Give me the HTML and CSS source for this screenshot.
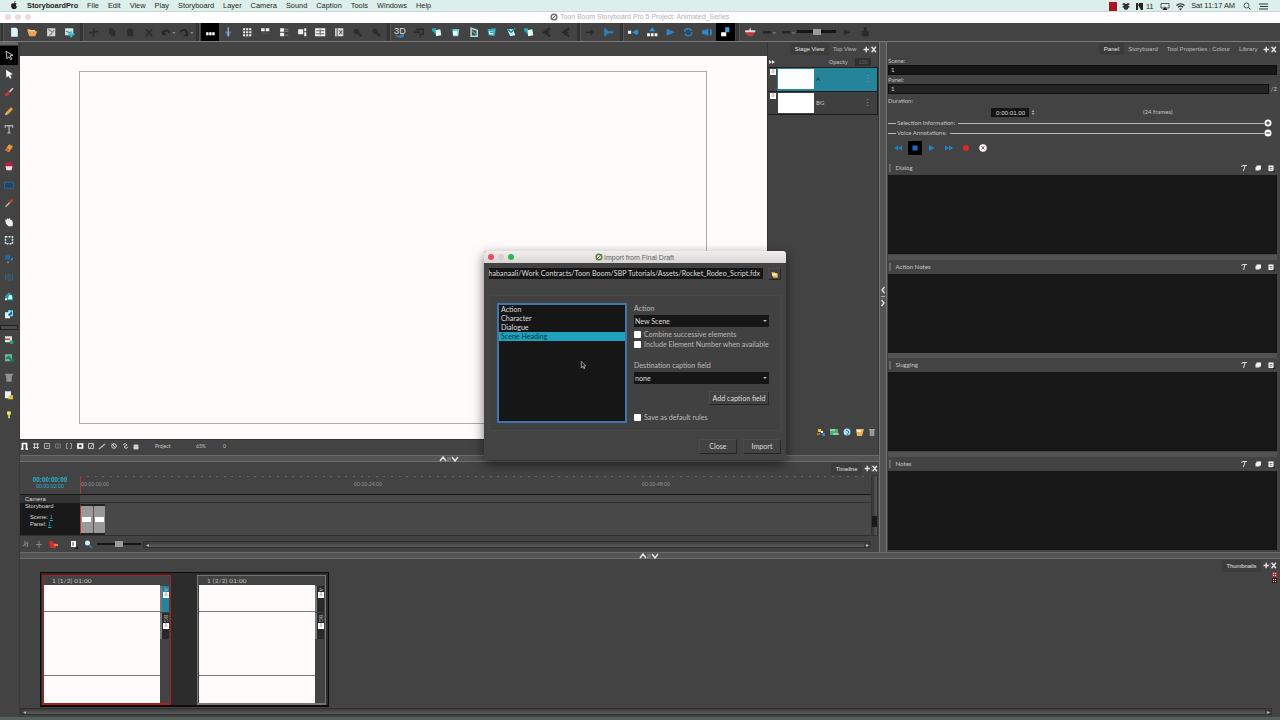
FILE: index.html
```html
<!DOCTYPE html>
<html lang="en">
<head>
    <meta charset="UTF-8">
    <title>StoryboardPro</title>
    <link rel="stylesheet" href="styles.css">
</head>
<body>
    <svg class="defs">
        <symbol id="new" viewBox="0 0 18 18"><path d="M6 4.500h5l1.500 1.500v7.500h-6.500z" fill="#d8f3fa"/></symbol>
        <symbol id="open" viewBox="0 0 18 18"><path d="M4 6h3l1 1h4v1h2l-2 5h-6z" fill="#eda055"/><path d="M5 7h7v1h-6z" fill="#ffd9a8"/></symbol>
        <symbol id="save" viewBox="0 0 18 18"><path d="M5 5h8v8h-8z" fill="#d4d4d4"/><path d="M6 6l4 3 2-2M7 12l3-2" stroke="#777" fill="none"/></symbol>
        <symbol id="saveas" viewBox="0 0 18 18"><path d="M5 5h8v7h-8z" fill="#cfe4e4"/><path d="M6 8l5 2" stroke="#55757a"/><path d="M11 8v6M8 11h6" stroke="#3cc0d4" stroke-width="2"/></symbol>
        <symbol id="cut" viewBox="0 0 18 18"><path d="M4 10l9-2M9 5l-1 8" stroke="#2b2b2b" stroke-width="1.500"/></symbol>
        <symbol id="copy" viewBox="0 0 18 18"><path d="M6 5h4v2h2v6h-4v-2h-2z" fill="#2c2c2c"/></symbol>
        <symbol id="paste" viewBox="0 0 18 18"><path d="M6 6h2v-1h2v1h2v7h-6z" fill="#2c2c2c"/></symbol>
        <symbol id="del" viewBox="0 0 18 18"><path d="M6 6l6 7M12 6l-6 7" stroke="#2b2b2b" stroke-width="1.500"/></symbol>
        <symbol id="undo" viewBox="0 0 18 18"><path d="M5 10c2-4 6-3 6 0" stroke="#282828" stroke-width="2" fill="none"/><path d="M4 7v5h5z" fill="#282828"/><path d="M14 9h3l-1.500 1.500z" fill="#aaa"/></symbol>
        <symbol id="redo" viewBox="0 0 18 18"><path d="M4 9c3-4 7-2 6 1" stroke="#282828" stroke-width="2" fill="none"/><path d="M12 8v5h-5z" fill="#282828"/><path d="M14 9h3l-1.500 1.500z" fill="#aaa"/></symbol>
        <symbol id="dots" viewBox="0 0 18 18"><path d="M5 9h2.400v3h-2.400zM8 9h2.400v3h-2.400zM11 9h2.400v3h-2.400z" fill="#fff"/></symbol>
        <symbol id="tl" viewBox="0 0 18 18"><path d="M6 9h6M9 4v8" stroke="#4c7fa8" stroke-width="1.500"/><path d="M7 10h4l-2 4z" fill="#5791c0"/><path d="M9 4v9" stroke="#bcd" stroke-width=".7"/></symbol>
        <symbol id="grid" viewBox="0 0 18 18"><path d="M5 5h8v8h-8z" fill="#eee"/><path d="M7.500 5v8M10.500 5v8M5 7.500h8M5 10.500h8" stroke="#444"/></symbol>
        <symbol id="two" viewBox="0 0 18 18"><path d="M5 5h3.500v3h-3.500zM9.500 5h3.500v3h-3.500z" fill="#eee"/><path d="M6 10h6" stroke="#555"/></symbol>
        <symbol id="list" viewBox="0 0 18 18"><path d="M5 5h4v3.500h-4zM5 9.500h4v3.500h-4z" fill="#eee"/><path d="M10 6h3M10 8h3M10 12h3" stroke="#888"/></symbol>
        <symbol id="side" viewBox="0 0 18 18"><path d="M5 6h5v5h-5zM11 5h2v3h-2zM11 9h2v4h-2z" fill="#eee"/></symbol>
        <symbol id="rows" viewBox="0 0 18 18"><path d="M4 5h10v8h-10z" fill="#eee"/><path d="M5 7.500h8M5 10.500h8M9 6v6" stroke="#666"/></symbol>
        <symbol id="film" viewBox="0 0 18 18"><path d="M5 5h8v8h-8z" fill="#ddd"/><path d="M7 5v8M9 7l3 4M12 7l-3 4" stroke="#555"/></symbol>
        <symbol id="lens" viewBox="0 0 18 18"><circle cx="8" cy="8" r="2.500" fill="#2b2b2b"/><path d="M9 9l4 4" stroke="#2b2b2b" stroke-width="2"/></symbol>
        <symbol id="threed" viewBox="0 0 18 18"><path d="M4 11q5 4 8-1l1 3q-5 3-9-1z" fill="#3184c4"/><text x="3" y="10.500" font-size="9" fill="#ddd" font-family="Liberation Sans">3D</text></symbol>
        <symbol id="threedoff" viewBox="0 0 18 18"><path d="M4 9h5l-2-3h6v5h-3v3" stroke="#2a2a2a" stroke-width="1.500" fill="none"/></symbol>
        <symbol id="la" viewBox="0 0 18 18"><path d="M4 5h4v3h-4z" fill="#28a9b6"/><path d="M7 7l5-1 1 6-5 1z" fill="#e2fafa"/><path d="M5 8l2 3 1-4z" fill="#1db3bf"/></symbol>
        <symbol id="lb" viewBox="0 0 18 18"><path d="M6 6h7l-1 7h-5z" fill="#7fdbd9"/><path d="M7 8h4v4h-4z" fill="#effefe"/><path d="M4 6l3 1" stroke="#279"/></symbol>
        <symbol id="lc" viewBox="0 0 18 18"><path d="M6 5l6 2v6h-6z" fill="none" stroke="#b5dedc" stroke-width="1.500"/><path d="M7 8l4 3" stroke="#43a5ab" stroke-width="1.500"/></symbol>
        <symbol id="ld" viewBox="0 0 18 18"><path d="M4.500 6l8-1-1 8-6-1z" fill="#2eb2c1"/><path d="M6 8h4v3h-4z" fill="#fff"/><path d="M7 9h3" stroke="#159"/></symbol>
        <symbol id="le" viewBox="0 0 18 18"><path d="M5 6h6l2 6-5 1z" fill="#c0f0f1"/><path d="M5 6l4 3 4-4" stroke="#228d9b" stroke-width="1.500" fill="none"/></symbol>
        <symbol id="share" viewBox="0 0 18 18"><path d="M12 5l-6 4 6 4M6 9h5" stroke="#292929" stroke-width="2" fill="none"/></symbol>
        <symbol id="arr" viewBox="0 0 18 18"><path d="M5 9h5" stroke="#292929" stroke-width="1.500"/><path d="M9 6l4 3-4 3z" fill="#292929"/></symbol>
        <symbol id="bar" viewBox="0 0 18 18"><path d="M5 5v8M8 9h5" stroke="#2782be" stroke-width="1.800"/><path d="M6 6l4 3-4 3z" fill="#2782be"/></symbol>
        <symbol id="pp" viewBox="0 0 18 18"><path d="M4 7.500h3v3h-3z" fill="#fff"/><path d="M8 9l5-3v6z" fill="#2793d8"/><path d="M12 9h2" stroke="#2793d8" stroke-width="3"/></symbol>
        <symbol id="up" viewBox="0 0 18 18"><path d="M9 4l3 4h-6z" fill="#2793d8"/><path d="M4 10h2.700v3h-2.700zM7.700 10h2.700v3h-2.700zM11.400 10h2.700v3h-2.700z" fill="#fff"/></symbol>
        <symbol id="play" viewBox="0 0 18 18"><path d="M5.500 5.500l8 3.500-8 3.500z" fill="#2b87c9"/></symbol>
        <symbol id="loop" viewBox="0 0 18 18"><circle cx="9" cy="9" r="3.500" fill="none" stroke="#2b7fc0" stroke-width="1.700" stroke-dasharray="9 2"/></symbol>
        <symbol id="snd" viewBox="0 0 18 18"><path d="M4 7h3l3-2v8l-3-2h-3z" fill="#2b8bd0"/><path d="M12 6q2 3 0 6" stroke="#2b8bd0" stroke-width="1.500" fill="none"/></symbol>
        <symbol id="cam" viewBox="0 0 18 18"><path d="M9 4h4v5h-4z" fill="#3aa4e0"/><path d="M5 9h5v4h-5z" fill="#fff"/></symbol>
        <symbol id="bowl" viewBox="0 0 18 18"><path d="M4 8h10l-2 4h-1v1h-4v-1h-1z" fill="#bd3a3a"/><path d="M4 7h10v2h-10zM9 4l1 3h-2z" fill="#e5d5d5"/></symbol>
        <symbol id="dash" viewBox="0 0 18 18"><path d="M4 9h8" stroke="#252525" stroke-width="2.500"/><path d="M13 9h4l-2 2z" fill="#777"/></symbol>
        <symbol id="tri" viewBox="0 0 18 18"><path d="M6 6l6 3-6 3z" fill="#282828"/></symbol>
        <symbol id="man" viewBox="0 0 18 18"><path d="M7.500 4h3v4h2v5h-7v-5h2z" fill="#2b2b2b"/></symbol>

        <symbol id="arrow1" viewBox="0 0 18 18"><path d="M6 5l7 4-3 .6 2 3-1.200.9-2-3-1.800 2z" fill="#111" stroke="#eee" stroke-width=".8"/></symbol>
        <symbol id="arrow2" viewBox="0 0 18 18"><path d="M6 4.500l7 4.500-3 .6 1.600 3-1.500.9-1.800-3-1.800 2z" fill="#fff"/></symbol>
        <symbol id="brush" viewBox="0 0 18 18"><path d="M13 5l-4 4" stroke="#cfd0d4" stroke-width="1.700"/><path d="M9.500 8.500l-4 4" stroke="#c63535" stroke-width="2.600"/></symbol>
        <symbol id="pencil" viewBox="0 0 18 18"><path d="M12 6l-5 5" stroke="#e5a338" stroke-width="3"/><path d="M5 13l1-3 2 2z" fill="#f3ddb3"/></symbol>
        <symbol id="text" viewBox="0 0 18 18"><path d="M5 5.500h8M9 5.500v7M7.500 12.500h3M5.300 5v2.500M12.700 5v2.500" stroke="#aaa" stroke-width="1.300"/></symbol>
        <symbol id="eraser" viewBox="0 0 18 18"><path d="M9 5l4 2-4 6-4-2z" fill="#e29a41"/><path d="M6.500 8.500l3 1.500-1.500 2.500-2.500-1.500z" fill="#d05f35"/></symbol>
        <symbol id="paint" viewBox="0 0 18 18"><path d="M5.500 5h7v5h-7z" fill="#b81e3f"/><path d="M5.500 9h7l-1 4h-5z" fill="#f2dfe1"/></symbol>
        <symbol id="rect" viewBox="0 0 18 18"><path d="M4.500 6h9v6h-9z" fill="#214661" stroke="#2c648f"/></symbol>
        <symbol id="drop" viewBox="0 0 18 18"><path d="M12.500 5.500l-3.500 3.500" stroke="#d44333" stroke-width="2"/><path d="M9.500 8.500l-4 4" stroke="#d5c08c" stroke-width="1.200"/></symbol>
        <symbol id="hand" viewBox="0 0 18 18"><path d="M5 6l1.500 1 .5-2 1.500 1 1-1.500 1 2 1.500.5 1 3-.5 3h-4l-2.500-2.500z" fill="#eee"/></symbol>
        <symbol id="marq" viewBox="0 0 18 18"><path d="M5.500 5.500h7v7h-7z" fill="none" stroke="#c8eef1" stroke-width="1.500" stroke-dasharray="2 1"/></symbol>
        <symbol id="pivot" viewBox="0 0 18 18"><path d="M5 5h5v4h-5z" fill="#2167a3"/><path d="M11 8h2v2h-2zM7 11h2v2h-2z" fill="#4a8bb9"/></symbol>
        <symbol id="split" viewBox="0 0 18 18"><path d="M5.500 6v6M8 6v6h2v-6zM12.500 6v6" stroke="#2d6581" fill="none"/></symbol>
        <symbol id="t1" viewBox="0 0 18 18"><path d="M5 9l4-4 4 4v4h-7z" fill="#2b9caf"/><path d="M9 8h3v4h-4zM5 11h2v2h-2z" fill="#d8fafa"/></symbol>
        <symbol id="t2" viewBox="0 0 18 18"><path d="M8 5h5v6h-5z" fill="#78d8ec"/><path d="M5 7h5v6h-5z" fill="#d5f5fa"/><path d="M8 9l4-3v3l-3 2z" fill="#1a6ea6"/></symbol>
        <symbol id="addp" viewBox="0 0 18 18"><path d="M5 5h7v6h-7z" fill="#dfe5dc"/><path d="M5 8h5" stroke="#b54b43" stroke-width="1.400"/><circle cx="11.500" cy="11" r="2" fill="#2e9c78"/></symbol>
        <symbol id="addg" viewBox="0 0 18 18"><path d="M5 5h7v7h-7z" fill="#72b698"/><path d="M6 9l3-1 2 3h3" stroke="#167d5a" stroke-width="2" fill="none"/></symbol>
        <symbol id="trash" viewBox="0 0 18 18"><path d="M5 5.500h8v1.500h-1l-.5 6.500h-5l-.5-6.500h-1z" fill="#929292"/></symbol>
        <symbol id="note" viewBox="0 0 18 18"><path d="M5 5h6v7h-6z" fill="#e8f0ff"/><path d="M9 9h4v4h-5z" fill="#e5c33c"/></symbol>
        <symbol id="bulb" viewBox="0 0 18 18"><path d="M7 6h4v3l-1 1v3h-2v-3l-1-1z" fill="#d6bb47"/><path d="M7.500 7h2v2h-2z" fill="#fff8bd"/></symbol>

        <symbol id="plusx" viewBox="0 0 13 8"><path d="M3 1.500v5M.5 4h5M8 1.500l4 5M12 1.500l-4 5" stroke="#e4e4e4" stroke-width="1.300"/><path d="M6.700 1v6" stroke="#777" stroke-width=".6"/></symbol>
        <symbol id="eye" viewBox="0 0 6 6"><path d="M0 0h6v6h-6z" fill="#fff"/><path d="M3 0v2M1.500 3h3" stroke="#777" stroke-width=".8"/></symbol>
        <symbol id="ital" viewBox="0 0 10 10"><path d="M3.500 2.500h4.500M6 2.500l-1.500 5.500M3 4v-1.500" stroke="#ddd" fill="none"/></symbol>
        <symbol id="page" viewBox="0 0 10 10"><path d="M3.500 2.500h4.500v4h-4.500z" fill="#fff"/><path d="M2.500 4h4v3.500h-4z" fill="#eee"/></symbol>
        <symbol id="menu" viewBox="0 0 10 10"><path d="M2.500 2.500h5v5.500h-5z" fill="#fff"/><path d="M3.500 4.500h3M3.500 6.200h3" stroke="#555" stroke-width=".8"/><path d="M8.500 7v2h-2z" fill="#111"/></symbol>
        <symbol id="updown" viewBox="0 0 20 6"><path d="M1 5l3-4 3 4M13 1l3 4 3-4" fill="none" stroke="#e2e2e2" stroke-width="1.500"/><path d="M9 1v4M11 1v4" stroke="#aaa" stroke-width=".7"/></symbol>
        <symbol id="toon" viewBox="0 0 8 8"><circle cx="4" cy="4" r="2.800" fill="none" stroke="#5b7d35" stroke-width="1.500"/><path d="M1.500 6.500l5-5" stroke="#5b7d35"/></symbol>
    </svg>

    <header class="menubar">
        <svg class="apple" viewBox="0 0 8 9"><path d="M4 2.500c1-.7 2-.5 2.700.2-1 .8-1 2.400.3 3.100-.5 1.500-1.400 2.400-2 2.300-.7-.2-1-.2-1.600 0-1 .3-2.400-1.900-2.400-3.600 0-2 1.600-2.900 3-2zM4 2c0-1 .6-1.800 1.500-2 0 1-.5 1.900-1.500 2z" fill="#222"/></svg>
        <b>StoryboardPro</b>
        <nav><span>File</span><span>Edit</span><span>View</span><span>Play</span><span>Storyboard</span><span>Layer</span><span>Camera</span><span>Sound</span><span>Caption</span><span>Tools</span><span>Windows</span><span>Help</span></nav>
        <div class="status">
            <svg class="s-icons" viewBox="0 0 82 10">
                <path d="M0 1h8v9h-8z" fill="#a91623"/>
                <path d="M13 3l2-1 2 1 2-1 2 1-2 1.500 2 1.500-2 1v1l-2 1-2-1v-1l-2-1 2-1.500z" fill="#333"/>
                <path d="M27 9v-7h2l1 3v-3h4v7h-2l-3-5v5z" fill="#222"/>
                <text x="37" y="8" font-size="7.200" font-family="Liberation Sans" fill="#222">11</text>
                <path d="M55 7h-3v-4.500h8v4.500h-3" fill="none" stroke="#333" stroke-width=".8"/><path d="M53.500 9l2.500-3.500 2.500 3.500z" fill="#222"/>
                <path d="M67.500 4.500q4-3.500 8 0M69 6.200q2.500-2 5 0" fill="none" stroke="#222" stroke-width="1.200"/><path d="M70 7.500h3l-1.500 2z" fill="#222"/>
            </svg>
            <span>Sat 11:17 AM</span>
            <svg class="s-end" viewBox="0 0 26 10"><circle cx="3.500" cy="4.500" r="2.500" fill="none" stroke="#333" stroke-width=".8"/><path d="M5.500 6.500l2 2M16 3h9M17 5.500h8M16 8h9" stroke="#333" stroke-width="1"/></svg>
        </div>
    </header>

    <div class="titlebar">
        <i></i><i></i><i></i>
        <p><svg viewBox="0 0 8 8"><use href="#toon"/></svg>Toon Boom Storyboard Pro 5 Project: Animated_Series</p>
    </div>

    <div class="toolbar">
        <div class="group"><svg><use href="#new"/></svg><svg><use href="#open"/></svg><svg><use href="#save"/></svg><svg><use href="#saveas"/></svg></div>
        <div class="group"><svg><use href="#cut"/></svg><svg><use href="#copy"/></svg><svg><use href="#paste"/></svg><svg><use href="#del"/></svg><svg><use href="#undo"/></svg><svg><use href="#redo"/></svg></div>
        <div class="group"><svg class="on"><use href="#dots"/></svg><svg><use href="#tl"/></svg><svg><use href="#grid"/></svg><svg><use href="#two"/></svg><svg><use href="#list"/></svg><svg><use href="#side"/></svg><svg><use href="#rows"/></svg><svg><use href="#film"/></svg><svg><use href="#lens"/></svg><svg><use href="#lens"/></svg></div>
        <div class="group"><svg><use href="#threed"/></svg><svg><use href="#threedoff"/></svg><svg><use href="#la"/></svg><svg><use href="#lb"/></svg><svg><use href="#lc"/></svg><svg><use href="#ld"/></svg><svg><use href="#le"/></svg><svg><use href="#la"/></svg><svg><use href="#share"/></svg><svg><use href="#share"/></svg></div>
        <div class="group"><svg><use href="#arr"/></svg><svg><use href="#bar"/></svg></div>
        <div class="group"><svg><use href="#pp"/></svg><svg><use href="#up"/></svg><svg><use href="#play"/></svg><svg><use href="#loop"/></svg><svg><use href="#snd"/></svg><svg class="on"><use href="#cam"/></svg></div>
        <div class="group"><svg><use href="#bowl"/></svg><svg><use href="#dash"/></svg><svg><use href="#dash"/></svg><div class="slider"><b></b></div><svg><use href="#tri"/></svg><svg><use href="#man"/></svg></div>
    </div>

    <div class="workspace">
        <aside class="tools">
            <hr>
            <svg class="on"><use href="#arrow1"/></svg>
            <svg><use href="#arrow2"/></svg>
            <svg><use href="#brush"/></svg>
            <svg><use href="#pencil"/></svg>
            <svg><use href="#text"/></svg>
            <svg><use href="#eraser"/></svg>
            <svg><use href="#paint"/></svg>
            <svg><use href="#rect"/></svg>
            <svg><use href="#drop"/></svg>
            <svg><use href="#hand"/></svg>
            <svg><use href="#marq"/></svg>
            <svg><use href="#pivot"/></svg>
            <svg><use href="#split"/></svg>
            <svg><use href="#t1"/></svg>
            <svg><use href="#t2"/></svg>
            <hr class="mid">
            <svg><use href="#addp"/></svg>
            <svg><use href="#addg"/></svg>
            <svg><use href="#trash"/></svg>
            <svg><use href="#note"/></svg>
            <svg><use href="#bulb"/></svg>
        </aside>

        <div class="content">
            <div class="upper">
                <div class="left">
                    <section class="stage">
                        <div class="view">
                            <div class="canvas"><div class="frame"></div></div>
                            <div class="view-bar">
                                <svg viewBox="0 0 120 10" fill="none" stroke="#ccc">
                                    <path d="M2.500 8v-5.500h4v5.500M1 8h2.500M5.500 8h2.500" stroke="#fff" stroke-width="1.700"/>
                                    <path d="M13 3h6M13 6.500h6M14.500 2v6M17.500 2v6"/>
                                    <path d="M24.500 2.500h5v5h-5zM26 5h2" stroke="#aaa"/>
                                    <path d="M35.500 3h5v4h-5zM38 3v4" stroke="#777"/>
                                    <path d="M48 2.500h-1.500v5h1.500M50 2.500h1.500v5h-1.500" stroke="#999"/>
                                    <path d="M58 3h4.500v4h-4.500z" stroke="#fff" stroke-width="1.700"/>
                                    <path d="M68.500 2.500h5v5h-5zM70 7l3-4" stroke="#bbb"/>
                                    <path d="M79 8l6-5" stroke="#bbb" stroke-width="1.300"/>
                                    <circle cx="94" cy="5" r="2.300"/><path d="M92 2.500l3 4" />
                                    <path d="M103 4q2-3 4 0l-3 2q2 3 4 0"/>
                                    <path d="M114 4h4v4h-4z" fill="#ccc"/>
                                </svg>
                                <span class="proj">Project</span><span class="zoom">65%</span><span class="rot">0</span>
                            </div>
                        </div>
                        <div class="layers">
                            <div class="tabs"><span class="tab active">Stage View</span><span class="tab">Top View</span><svg><use href="#plusx"/></svg></div>
                            <div class="opacity"><svg viewBox="0 0 6 6"><path d="M0 1l3 2-3 2zM3 1l3 2-3 2z" fill="#ddd"/></svg><span>Opacity</span><em>100</em></div>
                            <div class="layer selected"><svg class="eye"><use href="#eye"/></svg><div class="pic"></div><span>A</span><i>⋮</i></div>
                            <div class="layer"><svg class="eye"><use href="#eye"/></svg><div class="pic"></div><span>BG</span><i>⋮</i></div>
                            <div class="layer-tools">
                                <svg viewBox="0 0 64 12">
                                    <path d="M3 3h3v3h-3z" fill="#edbd45"/><path d="M6 5h2v2h-2z" fill="#fff"/><path d="M7 7h3v3h-3z" fill="#3186c9"/><path d="M2 7h3v2h-3z" fill="#c3702e"/>
                                    <path d="M15 3h8v6h-8z" fill="#4fae74"/><path d="M15 4h5M18 8l6 0" stroke="#d9f2dc"/>
                                    <circle cx="32" cy="6" r="3.500" fill="#a9def2"/><path d="M31 4l3 2-2 3" stroke="#207da7" fill="none"/>
                                    <path d="M41 3h8l-2 7h-5z" fill="#eab05c"/><path d="M42 4h4v2h-4z" fill="#fff2cf"/>
                                    <path d="M54 3h6v1.500h-.7v5.500h-4.600v-5.500h-.7z" fill="#999"/>
                                </svg>
                            </div>
                        </div>
                    </section>
                    <div class="splitter"><svg class="ud-stage"><use href="#updown"/></svg></div>
                    <section class="timeline">
                        <div class="tabs"><span class="tab active">Timeline</span><svg><use href="#plusx"/></svg></div>
                        <div class="tl-body">
                            <div class="tl-main">
                                <div class="ruler">
                                    <div class="codes"><b>00:00:00:00</b><small>00:00:02:00</small></div>
                                    <div class="ticks"><span>00:00:00:00</span><span>00:00:24:00</span><span>00:00:48:00</span></div>
                                </div>
                                <div class="track camera"><div class="name">Camera</div></div>
                                <div class="track board">
                                    <div class="name">Storyboard<p>Scene: <u>1</u></p><p>Panel: <u>1</u></p></div>
                                    <div class="clips"><i></i><i></i></div>
                                </div>
                            </div>
                            <div class="vscroll"><b></b></div>
                        </div>
                        <div class="tl-tools">
                            <svg viewBox="0 0 76 12"><path d="M3 8l5-4M5 3v5M8 5l-1 4" stroke="#888"/><path d="M19 3v7M16 6.500h6" stroke="#888"/><path d="M29 3h4v2h3v5h-6z" fill="#ce3028"/><path d="M34 7h4" stroke="#f0795f" stroke-width="2"/><path d="M51 3h5v6h-5z" fill="#fff"/><path d="M52 5h2M52 7h2" stroke="#444"/><path d="M58 8v3h-3z" fill="#111"/><circle cx="67.500" cy="5" r="2.500" fill="#d1eff5"/><path d="M69 7l3 3" stroke="#2a90ae" stroke-width="1.500"/></svg>
                            <div class="slider"><b></b></div>
                            <div class="hscroll"><i>◂</i><i>▸</i></div>
                        </div>
                    </section>
                </div>

                <div class="vsplit"><svg viewBox="0 0 6 24"><path d="M4.500 2l-2.500 3 2.500 3M1.500 15l2.500 3-2.500 3" fill="none" stroke="#e2e2e2" stroke-width="1.300"/><path d="M1 11.500h4" stroke="#aaa"/></svg></div>

                <section class="panel">
                    <div class="tabs"><span class="tab active">Panel</span><span class="tab">Storyboard</span><span class="tab">Tool Properties : Colour</span><span class="tab">Library</span><svg><use href="#plusx"/></svg></div>
                    <label>Scene:</label>
                    <div class="field">1</div>
                    <label>Panel:</label>
                    <div class="field-row"><div class="field dim">1</div><span>/2</span></div>
                    <label class="dur">Duration:</label>
                    <div class="duration"><b>0:00:01.00</b><i>▴<br>▾</i><span>(24 frames)</span></div>
                    <div class="fold">Selection Information:<svg viewBox="0 0 8 8"><circle cx="4" cy="4" r="3.500" fill="#fff"/><path d="M2 4h4M4 2v4" stroke="#333"/></svg></div>
                    <div class="fold">Voice Annotations:<svg viewBox="0 0 8 8"><circle cx="4" cy="4" r="3.500" fill="#fff"/><path d="M2 4h4" stroke="#333"/></svg></div>
                    <div class="voice">
                        <svg viewBox="0 0 14 14"><path d="M7 4.500v5l-4-2.500zM11 4.500v5l-4-2.500z" fill="#237fbe"/></svg>
                        <svg viewBox="0 0 14 14" class="on"><path d="M4.500 4.500h5v5h-5z" fill="#1d69be"/></svg>
                        <svg viewBox="0 0 14 14"><path d="M4 4l6 3-6 3z" fill="#2683c5"/></svg>
                        <svg viewBox="0 0 14 14"><path d="M3 4.500l4 2.500-4 2.500zM7 4.500l4.500 2.500-4.500 2.500z" fill="#2683c5"/></svg>
                        <svg viewBox="0 0 14 14"><circle cx="7" cy="7" r="3" fill="#d82b2b"/></svg>
                        <svg viewBox="0 0 14 14"><circle cx="7" cy="7" r="3.700" fill="#fff"/><path d="M5.500 5l3 3.500M8.500 5l-3 3.500" stroke="#935"/></svg>
                    </div>
                    <div class="note"><h4><span>Dialog</span><svg><use href="#ital"/></svg><svg><use href="#page"/></svg><svg><use href="#menu"/></svg></h4><div></div></div>
                    <div class="note"><h4><span>Action Notes</span><svg><use href="#ital"/></svg><svg><use href="#page"/></svg><svg><use href="#menu"/></svg></h4><div></div></div>
                    <div class="note"><h4><span>Slugging</span><svg><use href="#ital"/></svg><svg><use href="#page"/></svg><svg><use href="#menu"/></svg></h4><div></div></div>
                    <div class="note"><h4><span>Notes</span><svg><use href="#ital"/></svg><svg><use href="#page"/></svg><svg><use href="#menu"/></svg></h4><div></div></div>
                </section>
            </div>

            <div class="splitter"><svg class="ud-main"><use href="#updown"/></svg></div>

            <section class="thumbs">
                <div class="tabs"><span class="tab active">Thumbnails</span><svg><use href="#plusx"/></svg></div>
                <div class="strip-row">
                    <div class="strip">
                        <div class="thumb current">
                            <h5>1 (1/2) 01:00</h5>
                            <div class="thumb-body"><div class="shot"></div><div class="mini"><p class="sel">A<svg><use href="#eye"/></svg></p><p>BG<svg><use href="#eye"/></svg></p></div></div>
                        </div>
                        <div class="thumb">
                            <h5>1 (2/2) 01:00</h5>
                            <div class="thumb-body"><div class="shot"></div><div class="mini"><p>A<svg><use href="#eye"/></svg></p><p>BG<svg><use href="#eye"/></svg></p></div></div>
                        </div>
                    </div>
                    <svg class="marks" viewBox="0 0 5 12"><path d="M0 0h5v5h-5z" fill="#a33"/><path d="M0 6h5v5h-5z" fill="#411"/><path d="M1 1.500h3M1 3.500h3M1 7.500h3M1 9.500h3" stroke="#fff" stroke-dasharray="1 1"/></svg>
                </div>
                <div class="hscroll"><i>◂</i><i>▸</i></div>
            </section>
        </div>
    </div>

    <div class="dialog">
        <div class="dialog-title">
            <i class="red"></i><i></i><i class="green"></i>
            <p><svg viewBox="0 0 8 8"><use href="#toon"/></svg>Import from Final Draft</p>
        </div>
        <div class="path-row">
            <div class="path"><span>habanaali/Work Contracts/Toon Boom/SBP Tutorials/Assets/Rocket_Rodeo_Script.fdx</span></div>
            <button><svg viewBox="0 0 10 8"><path d="M2 2h3l1 1h2v4h-4z" fill="#ecb04c"/><path d="M3 3h4v2h-4z" fill="#fff0c4"/></svg></button>
        </div>
        <div class="rules">
            <ul><li>Action</li><li>Character</li><li>Dialogue</li><li class="selected">Scene Heading</li></ul>
            <div class="options">
                <h6>Action</h6>
                <div class="select">New Scene</div>
                <div class="check first"><i></i>Combine successive elements</div>
                <div class="check"><i></i>Include Element Number when available</div>
                <h6 class="dest">Destination caption field</h6>
                <div class="select">none</div>
                <button class="add">Add caption field</button>
                <div class="check save"><i></i>Save as default rules</div>
            </div>
        </div>
        <div class="actions"><button>Close</button><button>Import</button></div>
        <svg class="cursor" viewBox="0 0 8 10"><path d="M1.500 1l5 5-2.300.2 1.300 2.500-1 .5-1.300-2.500-1.700 1.500z" fill="#111" stroke="#eee" stroke-width=".7"/></svg>
    </div>
</body>
</html>
```

FILE: styles.css
```css
* {
    margin: 0;
    padding: 0;
    box-sizing: border-box;
}

body {
    width: 1280px;
    height: 720px;
    display: flex;
    flex-direction: column;
    overflow: hidden;
    background: #53625d;
    color: #c6c6c6;
    font-family: Lato, "Liberation Sans", sans-serif;
    font-size: 6px;
    line-height: 8px;
    position: relative;
}

svg {
    display: block;
    flex: none;
}

i, em {
    font-style: normal;
}

.defs {
    display: none;
}

/* mac menu bar */
.menubar {
    height: 12px;
    flex: none;
    display: flex;
    align-items: center;
    padding-left: 10px;
    background: #dcefea;
    border-bottom: 1px solid #c8d5d2;
    color: #1f2523;
    font: 7.400px/11px "Liberation Sans", sans-serif;
}

.apple {
    width: 8px;
    height: 9px;
}

.menubar b {
    width: 51px;
    margin-left: 9px;
    letter-spacing: -.05px;
}

.menubar nav {
    display: flex;
    gap: 9px;
    margin-left: 9px;
}

.status {
    display: flex;
    align-items: center;
    margin-left: auto;
    padding-right: 11px;
}

.s-icons {
    width: 82px;
    height: 10px;
}

.s-end {
    width: 26px;
    height: 10px;
    margin-left: 8px;
}

.titlebar {
    height: 10.500px;
    flex: none;
    display: flex;
    align-items: center;
    gap: 4px;
    padding-left: 5px;
    background: #fefefe;
}

.titlebar i {
    width: 6px;
    height: 6px;
    border-radius: 50%;
    background: #e9dede;
}

.titlebar p {
    display: flex;
    align-items: center;
    gap: 2px;
    margin-left: 515px;
    color: #b4b4b4;
    font: 6.950px/10px "Liberation Sans", sans-serif;
    white-space: nowrap;
}

.titlebar p svg {
    width: 8px;
    height: 8px;
    filter: grayscale(1);
}

/* main toolbar */
.toolbar {
    height: 19.500px;
    flex: none;
    display: flex;
    background: #434343;
    border-bottom: 1px solid #7b7b7b;
}

.group {
    display: flex;
    border-left: 2px solid #333;
    border-right: 1px solid #333;
    padding: 0 1.600px;
    box-shadow: inset 1px 0 #545454;
}

.group:first-child {
    margin-left: 1.200px;
}

.group svg {
    width: 18.400px;
    height: 18.500px;
}

.group:last-child {
    border-right: 0;
}

.on {
    background: #000;
}

.slider {
    width: 42px;
    display: flex;
    align-items: center;
    justify-content: center;
    background: linear-gradient(#161616, #161616) center / 39px 3px no-repeat;
}

.slider b {
    width: 8px;
    height: 6px;
    background: #9b9b9b;
}

.workspace {
    height: 675px;
    flex: none;
    display: flex;
    background: #434343;
}

.tools {
    width: 20px;
    display: flex;
    flex-direction: column;
    border-right: 1px solid #3a3a3a;
}

.tools hr {
    height: 4px;
    border: 0;
    border-bottom: 1px solid #333;
    background: #666;
    width: 18px;
    flex: none;
}

.tools hr.mid {
    height: 5px;
    margin: 1px 0;
    border: 1px solid #222;
    background: #4c4c4c;
}

.tools svg {
    width: 18px;
    height: 18.500px;
}

.content {
    width: 1260px;
    display: flex;
    flex-direction: column;
}

.upper {
    height: 510px;
    display: flex;
}

.left {
    width: 859px;
    display: flex;
    flex-direction: column;
}

.stage {
    height: 413px;
    display: flex;
}

.view {
    width: 747px;
    padding-top: 14px;
}

.canvas {
    height: 383px;
    background: #fffbfa;
    padding: 15px 60px 0 59px;
}

.frame {
    height: 353px;
    border: 1px solid #adabab;
}

.view-bar {
    height: 16px;
    display: flex;
    align-items: center;
    padding-bottom: 3px;
    border-top: 1px solid #333;
    font-size: 5px;
}

.view-bar svg {
    width: 120px;
    height: 10px;
}

.proj {
    width: 41px;
    margin-left: 15px;
}

.zoom {
    width: 27px;
}

/* tab headers */
.tabs {
    height: 14px;
    flex: none;
    display: flex;
    align-items: center;
    justify-content: flex-end;
    font-family: "Liberation Sans", sans-serif;
    font-size: 5.800px;
}

.tab {
    height: 12px;
    padding: 0 4.500px;
    line-height: 12px;
    white-space: nowrap;
    color: #bdbdbd;
}

.tab.active {
    background: #3c3c3c;
    color: #e4e4e4;
}

.tabs svg {
    width: 14px;
    height: 9px;
    margin: 0 1px 0 2px;
}

.layers {
    width: 112px;
    display: flex;
    flex-direction: column;
    border-left: 1px solid #333;
    border-right: 1px solid #333;
}

.opacity {
    height: 11px;
    display: flex;
    align-items: center;
    padding-left: 1px;
    font-family: "Liberation Sans", sans-serif;
    font-size: 5.500px;
}

.opacity svg {
    width: 6px;
    height: 6px;
}

.opacity span {
    margin-left: 54px;
    width: 26px;
}

.opacity em {
    width: 16px;
    height: 8px;
    text-align: center;
    background: #303030;
    color: #666;
}

.layer {
    height: 23.500px;
    width: 110px;
    display: flex;
    align-items: center;
    padding-left: 2px;
    border: solid #1d1d1d;
    border-width: 1px 1px 0 0;
    background: #404040;
}

.layer + .layer-tools {
    border-top: 1px solid #1d1d1d;
}

.layer.selected {
    background: linear-gradient(90deg, #444 9px, #25849a 9px);
    color: #0a2d3a;
}

.eye {
    width: 6px;
    height: 6px;
    align-self: flex-start;
    margin-top: 1px;
}

.pic {
    width: 36px;
    height: 20px;
    margin: 0 2px;
    background: #fff;
}

.layer span {
    flex: 1;
}

.layer i {
    margin-right: 5px;
    font-size: 9px;
    color: #8f8f8f;
}

.layer-tools {
    flex: 1;
    display: flex;
    align-items: flex-end;
    padding: 0 0 17px 47px;
}

.layer-tools svg {
    width: 64px;
    height: 12px;
}

.splitter {
    height: 7px;
    flex: none;
    background: #545454;
    border-top: 1px solid #6a6a6a;
    border-bottom: 1px solid #6e6e6e;
}

.splitter svg {
    width: 20px;
    height: 6px;
}

.ud-stage {
    margin-left: 419px;
}

.ud-main {
    margin-left: 619px;
}

/* timeline */
.timeline {
    height: 90px;
}

.timeline .tabs {
    height: 13px;
}

.tl-body {
    height: 61px;
    display: flex;
}

.tl-main {
    width: 851px;
}

.ruler {
    height: 20px;
    display: flex;
    border-bottom: 1px solid #161616;
    font-family: "Liberation Sans", sans-serif;
}

.codes {
    width: 60px;
    flex: none;
    padding-top: 2px;
    text-align: center;
    color: #24b3ca;
    line-height: 6px;
}

.codes b {
    display: block;
    font-size: 6.300px;
}

.codes small {
    display: block;
    font-size: 5.300px;
}

.ticks {
    width: 791px;
    display: flex;
    margin-top: 1px;
    padding-top: 4px;
    border-left: 1px solid #b33;
    background: repeating-linear-gradient(90deg, #666 0 2px, transparent 2px 7.600px) 6px 0 / 100% 1px no-repeat;
    color: #929292;
    font-size: 5.300px;
}

.ticks span {
    width: 273px;
    flex: none;
}

.ticks span:nth-child(2) {
    width: 288px;
}

.track {
    display: flex;
    border-bottom: 1px solid #303030;
    background: #484848;
    font-family: "Liberation Sans", sans-serif;
    font-size: 5.800px;
    color: #ddd;
}

.track .name {
    width: 60px;
    padding-left: 5px;
}

.camera {
    height: 8px;
}

.camera .name {
    background: #343434;
}

.board {
    height: 33px;
}

.board .name {
    background: #191919;
    line-height: 7px;
}

.board .name p {
    padding-left: 5px;
}

.board .name p:first-of-type {
    margin-top: 4px;
}

.board u {
    color: #28a9c9;
}

.clips {
    width: 25px;
    height: 31px;
    margin-top: 1px;
    display: flex;
    gap: 1px;
    border: solid #222;
    border-width: 2px 0;
    border-left: 1px solid #b33;
    background: #555;
}

.clips i {
    flex: 1;
    background: linear-gradient(#fff, #fff) center / 9px 5px no-repeat, #999;
    border-radius: 1px;
}

.vscroll {
    width: 7px;
    background: linear-gradient(90deg, #353535, #595959);
    border: 1px solid #333;
    padding-top: 40px;
}

.vscroll b {
    display: block;
    height: 11px;
    background: #191919;
}

.tl-tools {
    height: 16px;
    display: flex;
    align-items: center;
}

.tl-tools > svg {
    width: 76px;
    height: 12px;
}

.tl-tools .slider {
    height: 8px;
    width: 46px;
    background-size: 44px 2px;
}

.tl-tools .hscroll {
    width: 728px;
    margin-left: 1px;
}

.hscroll {
    height: 7px;
    display: flex;
    justify-content: space-between;
    border: 1px solid #303030;
    background: linear-gradient(#3a3a3a, #5c5c5c);
    line-height: 5px;
    color: #bbb;
}

.hscroll i {
    width: 6px;
    text-align: center;
    background: #3b3b3b;
}

.vsplit {
    width: 8px;
    padding-top: 243px;
    background: #545454;
    border: solid #757575;
    border-width: 0 1px;
}

.vsplit svg {
    width: 6px;
    height: 24px;
}

/* panel settings on the right */
.panel {
    width: 393px;
    padding: 0 3px 0 1px;
}

.panel .tabs {
    margin-right: -1px;
    font-size: 6.050px;
}

.panel .tabs svg {
    margin-left: 1px;
}

.panel label {
    display: block;
    height: 9px;
    line-height: 10px;
}

.field {
    height: 10px;
    padding-left: 2px;
    line-height: 8px;
    background: #171717;
    border: 1px solid #0f0f0f;
    color: #ddd;
}

.field.dim {
    width: 381px;
    background: #242424;
}

.field-row {
    display: flex;
    gap: 2px;
    line-height: 10px;
}

.panel .dur {
    height: 12px;
    line-height: 14px;
}

.duration {
    height: 12px;
    display: flex;
    align-items: center;
    padding-left: 103px;
}

.duration b {
    width: 38px;
    height: 9px;
    background: #141414;
    color: #ddd;
    padding-left: 5px;
    font: 6.200px/9px "Liberation Sans", sans-serif;
}

.duration i {
    width: 114px;
    padding-left: 3px;
    font-size: 4px;
    line-height: 3px;
}

.fold {
    height: 10px;
    display: flex;
    align-items: center;
    white-space: nowrap;
}

.fold::before {
    content: "";
    width: 8px;
    height: 1px;
    margin-right: 1px;
    background: #bbb;
}

.fold::after {
    content: "";
    flex: 1;
    order: 1;
    height: 1px;
    margin-left: 3px;
    background: #bbb;
}

.fold svg {
    order: 2;
    width: 8px;
    height: 8px;
    margin-right: 5px;
}

.voice {
    height: 23px;
    display: flex;
    gap: 3px;
    padding: 3px 0 0 3px;
}

.voice svg {
    width: 14px;
    height: 14px;
}

.note {
    height: 98.500px;
    border-bottom: 5.500px solid #525252;
}

.note:last-child {
    height: 93px;
    border-bottom: 0;
}

.note h4 {
    height: 14px;
    display: flex;
    align-items: center;
    gap: 3.500px;
    padding: 0 1px 0 7.500px;
    font-weight: normal;
    font-size: 6.100px;
    background: linear-gradient(#666, #666) 1px 3px / 2px 8px no-repeat;
}

.note h4 span {
    flex: 1;
}

.note h4 svg {
    width: 10px;
    height: 10px;
}

.note div {
    height: 79px;
    background: #171717;
}

/* thumbnails */
.thumbs {
    height: 158px;
}

.thumbs .tabs {
    height: 13px;
    padding-right: 2px;
}

.strip-row {
    height: 136px;
    display: flex;
    justify-content: space-between;
    padding: 0 3px 0 20px;
}

.marks {
    width: 5px;
    height: 12px;
}

.strip {
    width: 289px;
    height: 135px;
    display: flex;
    gap: 26px;
    padding: 2px 1px;
    border: 1px solid #0c0c0c;
    border-bottom-width: 2px;
    background: #2c2c2c;
}

.thumb {
    width: 129px;
    height: 130px;
    flex: none;
    border: 1px solid #777;
    border-bottom-width: 2px;
    background: #434343;
}

.thumb.current {
    border-color: #a82020;
}

.thumb h5 {
    height: 9px;
    padding-left: 9px;
    font: 6.400px/10px Lato, sans-serif;
    letter-spacing: .2px;
}

.thumb-body {
    height: 118px;
    display: flex;
    padding-left: 1px;
}

.shot {
    width: 116px;
    flex: none;
    background: linear-gradient(#777, #777) 0 26px / 100% 1px no-repeat, linear-gradient(#777, #777) 0 90px / 100% 1px no-repeat, #fffbfa;
}

.mini {
    width: 9px;
}

.mini p {
    width: 9px;
    height: 26px;
    display: flex;
    align-items: center;
    writing-mode: vertical-rl;
    margin-top: 1px;
    padding-top: 2px;
    background: #292929;
    color: #bbb;
    line-height: 7px;
    font-size: 5px;
    border-left: 2px solid #777;
}

.mini .sel {
    background: #25849a;
}

.mini svg {
    width: 6px;
    height: 6px;
    margin-top: 1px;
}

.thumbs > .hscroll {
    margin-right: 8px;
}

/* import window */
.dialog {
    position: absolute;
    left: 484px;
    top: 251px;
    width: 302px;
    height: 209px;
    background: #434343;
    border-radius: 3px 3px 0 0;
    box-shadow: 0 4px 12px rgba(0,0,0,.55);
    font-size: 7.100px;
    line-height: 9px;
    color: #cfcfcf;
}

.dialog-title {
    height: 12px;
    display: flex;
    align-items: center;
    gap: 4px;
    padding-left: 4px;
    border-radius: 3px 3px 0 0;
    background: linear-gradient(#f2eeee, #d8d5d5);
}

.dialog-title i {
    width: 6px;
    height: 6px;
    border-radius: 50%;
    background: #d5cece;
}

.dialog-title .red {
    background: #f04b56;
}

.dialog-title .green {
    background: #31b545;
}

.dialog-title p {
    display: flex;
    align-items: center;
    gap: 1px;
    margin-left: 77px;
    color: #666;
    font: 7px/11px "Liberation Sans", sans-serif;
}

.dialog-title p svg {
    width: 8px;
    height: 8px;
}

.path-row {
    display: flex;
    justify-content: space-between;
    padding: 5px 5px 0;
}

.path {
    width: 274px;
    height: 11px;
    overflow: hidden;
    background: #161616;
    line-height: 11px;
    letter-spacing: .045px;
    color: #ddd;
    white-space: nowrap;
    display: flex;
    justify-content: flex-end;
    padding-right: 3px;
}

button {
    border: 1px solid #4b4b4b;
    border-right-color: #292929;
    border-bottom-color: #242424;
    background: #424242;
    color: #ddd;
    font: inherit;
}

.path-row button {
    width: 13px;
    height: 12px;
}

.path-row button svg {
    width: 11px;
    height: 9px;
}

.rules {
    height: 136px;
    margin: 15px 5px 0;
    padding: 8px 8px 0;
    display: flex;
    border: 1px solid #484848;
    background: #414141;
}

.rules ul {
    width: 130px;
    height: 120px;
    margin: -1px 0 0 -1px;
    border: 2px solid #4474ae;
    background: #161616;
    list-style: none;
}

.rules li {
    height: 9px;
    padding-left: 2px;
    color: #ddd;
}

.rules li.selected {
    background: #1fa3bd;
    color: #07323c;
}

.options {
    width: 136px;
    margin-left: 7px;
    white-space: nowrap;
}

.options h6 {
    font-size: 7.100px;
    font-weight: normal;
    height: 11px;
    color: #bbb;
}

.select {
    width: 135px;
    height: 12px;
    display: flex;
    justify-content: space-between;
    align-items: center;
    padding: 0 2px 0 1px;
    background: #161616;
    color: #ddd;
}

.select::after {
    content: "";
    border: 2px solid transparent;
    border-top-color: #bbb;
    border-bottom: 0;
}

.check {
    height: 10.500px;
    display: flex;
    align-items: center;
    gap: 2px;
    color: #bbb;
}

.check.first {
    margin-top: 2px;
}

.check i {
    width: 7px;
    height: 7px;
    border-radius: 1px;
    margin-right: 1px;
    background: #fff;
}

.options .dest {
    margin-top: 11px;
}

.add {
    display: block;
    width: 60px;
    height: 14px;
    margin: 7px 0 0 75px;
}

.save {
    margin-top: 7px;
}

.actions {
    display: flex;
    justify-content: flex-end;
    gap: 6px;
    padding: 8px 5px 0;
}

.actions button {
    width: 38px;
    height: 15px;
}

.cursor {
    position: absolute;
    left: 96px;
    top: 109px;
    width: 7px;
    height: 10px;
}
```
